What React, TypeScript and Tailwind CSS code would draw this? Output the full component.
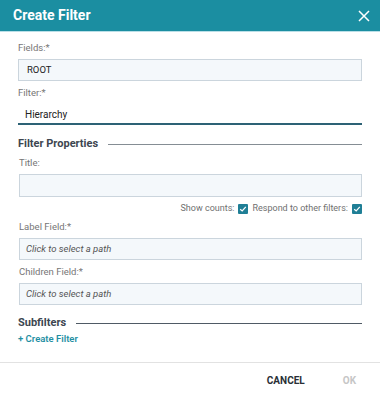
import React from "react";

const font = { fontFamily: "Roboto, 'Noto Sans', Arial, sans-serif" };

function Label({ text, className = "" }: { text: string; className?: string }) {
  return (
    <div className={`h-[16px] flex items-center text-[9.5px] text-[#767676] ${className}`}>
      {text}
    </div>
  );
}

function PathInput({ className = "" }: { className?: string }) {
  return (
    <div
      className={`h-[22px] flex items-center px-[6px] border border-[#cbd5dd] bg-[#f4f8fb] text-[9.5px] italic text-[#555] ${className}`}
    >
      Click to select a path
    </div>
  );
}

function Check() {
  return (
    <span className="inline-flex w-[10px] h-[10px] items-center justify-center bg-[#1f7f96] rounded-[1px]">
      <svg width="8" height="8" viewBox="0 0 8 8">
        <path d="M1.2 4.2 L3.2 6 L6.8 1.8" stroke="white" strokeWidth="1.2" fill="none" />
      </svg>
    </span>
  );
}

function Section({ title, lineColor, className = "" }: { title: string; lineColor: string; className?: string }) {
  return (
    <div className={`h-[16px] flex items-center gap-[10px] ${className}`}>
      <span className="text-[11px] font-bold text-[#3d4650]">{title}</span>
      <div className={`flex-1 h-px ${lineColor}`} />
    </div>
  );
}

export default function App() {
  return (
    <div className="w-[380px] h-[398px] bg-white flex flex-col" style={font}>
      <div className="h-[32px] bg-[#1b8ea1] border-b border-[#b9dfe7] flex items-center justify-between pl-[13px] pr-[10px]">
        <span className="text-white font-bold text-[14px]">Create Filter</span>
        <svg width="12" height="12" viewBox="0 0 12 12">
          <path d="M1 1 L11 11 M11 1 L1 11" stroke="white" strokeWidth="1.5" />
        </svg>
      </div>

      <div className="flex-1 px-[18px] pt-[8px]">
        <Label text="Fields:*" />
        <div className="mt-[3px] h-[22px] flex items-center px-[8px] border border-[#cbd5dd] bg-[#f4f8fb] text-[9.5px] text-[#222]">
          ROOT
        </div>

        <Label text="Filter:*" className="mt-[4px]" />
        <div className="h-[24px] pt-[4px] px-[7px] flex items-center border-b-2 border-[#2d6275] text-[10px] text-[#222]">
          Hierarchy
        </div>

        <Section title="Filter Properties" lineColor="bg-[#858d94]" className="mt-[11px]" />

        <Label text="Title:" className="mt-[3px] pl-[1px]" />
        <div className="mt-[3px] ml-[1px] h-[23px] border border-[#cbd5dd] bg-[#f4f8fb]" />

        <div className="mt-[4px] h-[16px] flex items-center justify-end gap-[4px] text-[9px] text-[#707070]">
          <span>Show counts:</span>
          <Check />
          <span>Respond to other filters:</span>
          <Check />
        </div>

        <Label text="Label Field:*" className="mt-[2px] pl-[1px]" />
        <PathInput className="mt-[3px] ml-[1px]" />

        <Label text="Children Field:*" className="mt-[4px] pl-[1px]" />
        <PathInput className="mt-[3px] ml-[1px]" />

        <Section title="Subfilters" lineColor="bg-[#4f5a65]" className="mt-[10px]" />
        <div className="h-[16px] flex items-center text-[9.5px] font-semibold text-[#1f8fa3]">+ Create Filter</div>
      </div>

      <div className="h-[36px] border-t border-[#e2e2e2] flex items-center justify-end gap-[38px] pr-[24px] text-[10px] font-bold">
        <span className="text-[#2a2f36]">CANCEL</span>
        <span className="text-[#c6c6c6]">OK</span>
      </div>
    </div>
  );
}
